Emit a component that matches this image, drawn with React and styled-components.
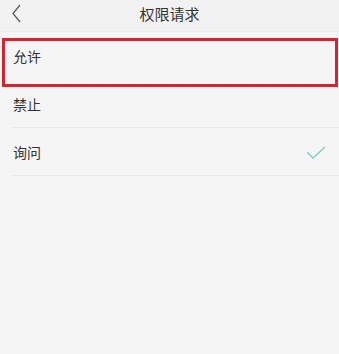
import React from "react"
import styled, { createGlobalStyle } from "styled-components"

const GlobalStyle = createGlobalStyle`
  html, body {
    margin: 0;
    padding: 0;
    background: #f5f5f5;
  }
  body {
    font-family: "Noto Sans CJK SC", "Noto Sans", sans-serif;
  }
`

const Page = styled.div`
  width: 339px;
  height: 354px;
  background: #f5f5f5;
  overflow: hidden;
`

const Header = styled.div`
  position: relative;
  height: 31px;
  display: flex;
  align-items: center;
  justify-content: center;
  background: #f2f2f2;
  border-bottom: 1px solid #ebebeb;
`

const Back = styled.div`
  position: absolute;
  left: 11px;
  top: 4px;
  width: 12px;
  height: 20px;
  display: flex;
`

const Title = styled.div`
  font-size: 15px;
  color: #333;
  line-height: 1;
  margin-top: -4px;
`

const List = styled.div`
  display: flex;
  flex-direction: column;
`

const Row = styled.div`
  position: relative;
  height: 48px;
  padding: 0 13px;
  display: flex;
  align-items: center;
  justify-content: space-between;
  font-size: 14px;
  color: #333;
  &::after {
    content: "";
    display: ${(p) => (p.$highlighted ? "none" : "block")};
    position: absolute;
    left: 12px;
    right: 0;
    bottom: 0;
    height: 1px;
    background: #e8e8e8;
  }
`

const Highlight = styled.div`
  position: absolute;
  left: 2px;
  right: 1px;
  top: 6px;
  height: 43px;
  border: 3px solid #d8222e;
  z-index: 2;
`

const Check = styled.svg`
  width: 22px;
  height: 16px;
  margin-right: -1px;
  margin-top: 2px;
`

const options = [
  { label: "允许", highlighted: true },
  { label: "禁止" },
  { label: "询问", checked: true },
]

export default function App() {
  return (
    <Page>
      <GlobalStyle />
      <Header>
        <Back>
          <svg width="12" height="20" viewBox="0 0 12 20">
            <polyline points="9,1 2,9.5 9,18" fill="none" stroke="#555" strokeWidth="1.2" />
          </svg>
        </Back>
        <Title>权限请求</Title>
      </Header>
      <List>
        {options.map((o) => (
          <Row key={o.label} $highlighted={o.highlighted}>
            <span>{o.label}</span>
            {o.checked && (
              <Check viewBox="0 0 22 16">
                <polyline points="2,7 8,13 20,2" fill="none" stroke="#7ccfc3" strokeWidth="1.3" />
              </Check>
            )}
            {o.highlighted && <Highlight />}
          </Row>
        ))}
      </List>
    </Page>
  )
}
